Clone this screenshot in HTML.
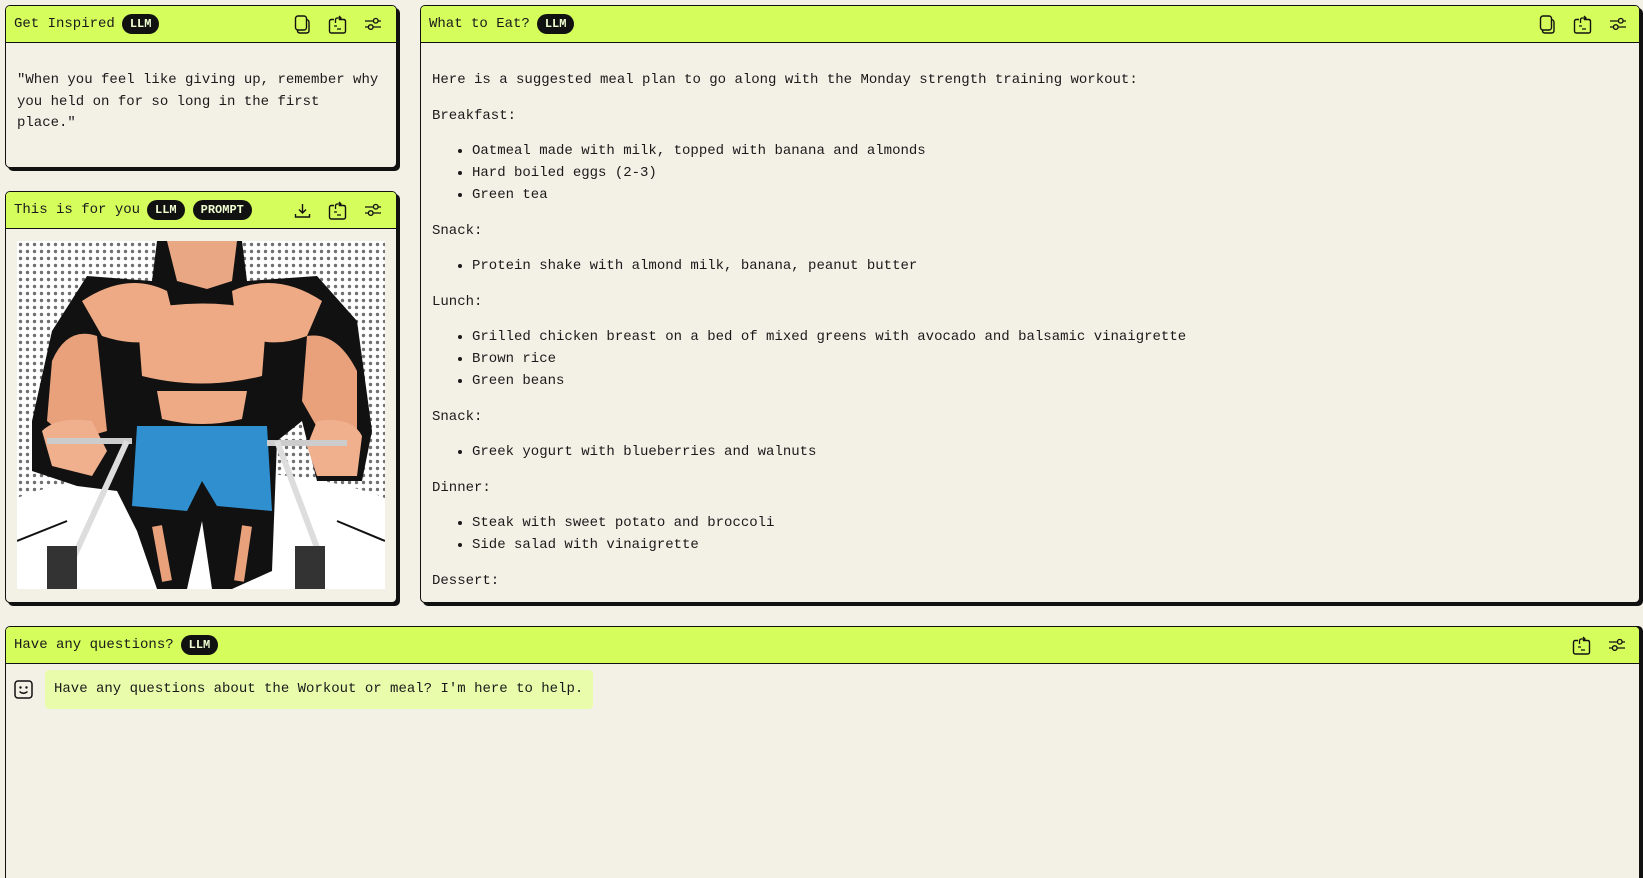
<!DOCTYPE html>
<html><head><meta charset="utf-8"><style>
*{box-sizing:border-box;margin:0;padding:0}
html{width:1643px;height:878px;overflow:hidden}
body{width:1643px;height:878px;background:#f3f0e6;font-family:"Liberation Mono",monospace;font-size:14px;color:#1a1a1a;position:relative;overflow:hidden}
.panel{position:absolute;border:1.5px solid #111;border-radius:5px;background:#f3f0e6;box-shadow:3px 3px 0 #111;overflow:hidden}
.hd{height:37px;background:#d5fd5c;border-bottom:1.5px solid #111;display:flex;align-items:center;padding-left:8px;position:relative}
.hd .t{font-size:14px;margin-right:7px}
.b{background:#111;color:#eefcd0;font-family:"Liberation Mono",monospace;font-weight:bold;font-size:12px;border-radius:10px;height:20px;line-height:20px;padding:0 8px;margin-right:8px}
.ic{position:absolute;top:9px;width:19px;height:19px}
.body{padding:12px 11px;line-height:22px}
.body p{margin:14px 0 13px}
.body ul{margin:0 0 13px 40px}
.body li{line-height:22px}
</style></head><body>
<svg width="0" height="0" style="position:absolute">
<defs>
<symbol id="copy" viewBox="0 0 19 19"><rect x="2.5" y="1" width="11" height="14" rx="2.5" fill="none" stroke="#111" stroke-width="1.4"/><path d="M13.5 4.5 Q16 5 16 7.5 V15.5 Q16 18 13.5 18 H7 Q4.5 18 4.5 15.5" fill="none" stroke="#111" stroke-width="1.4"/></symbol>
<symbol id="share" viewBox="0 0 19 19"><path d="M6 4.5 H3.5 Q1.5 4.5 1.5 6.5 V16 Q1.5 18 3.5 18 H15.5 Q17.5 18 17.5 16 V6.5 Q17.5 4.5 15.5 4.5 H12" fill="none" stroke="#111" stroke-width="1.4"/><path d="M7.5 8 V5 Q7.5 3 9.5 3 H13 M11 1 L13 3 L11 5" fill="none" stroke="#111" stroke-width="1.3"/><path d="M6 11 H9 M9 14 H13" stroke="#111" stroke-width="1.3"/></symbol>
<symbol id="sl" viewBox="0 0 19 19"><path d="M1 6 H17 M1 12 H17" stroke="#111" stroke-width="1.3"/><rect x="9.5" y="3.5" width="4.5" height="4.5" rx="2" fill="#d5fd5c" stroke="#111" stroke-width="1.3"/><rect x="4.5" y="9.8" width="4.5" height="4.5" rx="2" fill="#d5fd5c" stroke="#111" stroke-width="1.3"/></symbol>
<symbol id="dl" viewBox="0 0 19 19"><path d="M9.5 3 V12 M6 8.5 L9.5 12 L13 8.5 M2.5 13 V16 H16.5 V13" fill="none" stroke="#111" stroke-width="1.4"/></symbol>
</defs></svg>

<div class="panel" style="left:5px;top:5px;width:392px;height:163px">
<div class="hd"><span class="t">Get Inspired</span><span class="b">LLM</span>
<svg class="ic" style="left:287px"><use href="#copy"/></svg>
<svg class="ic" style="left:322px"><use href="#share"/></svg>
<svg class="ic" style="left:358px"><use href="#sl"/></svg></div>
<div style="padding:27px 11px;line-height:21.5px">"When you feel like giving up, remember why you held on for so long in the first place."</div>
</div>

<div class="panel" style="left:5px;top:191px;width:392px;height:412px">
<div class="hd"><span class="t">This is for you</span><span class="b">LLM</span><span class="b">PROMPT</span>
<svg class="ic" style="left:287px"><use href="#dl"/></svg>
<svg class="ic" style="left:322px"><use href="#share"/></svg>
<svg class="ic" style="left:358px"><use href="#sl"/></svg></div>
<svg style="position:absolute;left:11px;top:49px" width="368" height="348" viewBox="0 0 368 348">
<defs><pattern id="dots" width="7" height="7" patternUnits="userSpaceOnUse"><circle cx="3.5" cy="3.5" r="1.7" fill="#111"/></pattern></defs>
<rect width="368" height="348" fill="#fff"/>
<rect width="368" height="280" fill="url(#dots)" opacity=".6"/>
<ellipse cx="184" cy="290" rx="220" ry="60" fill="#fff"/>
<path d="M140 0 L225 0 L230 40 L300 35 L340 80 L355 190 L345 240 L300 240 L285 180 L260 200 L255 330 L215 348 L195 348 L185 280 L170 348 L140 348 L120 290 L100 250 L60 245 L15 230 L15 180 L35 90 L70 35 L135 40 Z" fill="#111"/>
<path d="M150 0 H220 L215 40 L190 48 L160 40 Z" fill="#e9a883"/>
<path d="M65 60 Q110 30 150 50 L160 90 Q130 110 85 95 Z M215 50 Q260 30 305 60 L290 95 Q250 110 220 90 Z" fill="#eeaa84"/>
<path d="M120 70 Q185 55 250 70 L245 135 Q185 150 125 135 Z" fill="#eeaa84"/>
<path d="M140 150 H230 L225 178 Q185 188 145 178 Z" fill="#eeaa84"/>
<path d="M35 120 Q50 85 80 95 L90 190 L55 200 L30 180 Z M290 95 Q320 90 340 130 L340 190 L305 195 L285 160 Z" fill="#e9a17c"/>
<path d="M25 190 Q40 175 75 180 L90 210 L75 235 L35 225 Z M300 180 Q335 175 345 195 L340 235 L300 235 L290 205 Z" fill="#f0b08e"/>
<path d="M120 185 H250 L255 270 L200 265 L185 240 L170 270 L115 265 Z" fill="#2f8fcf"/>
<path d="M115 200 H30 M250 202 H330" stroke="#ccc" stroke-width="6"/>
<path d="M110 200 L55 320 M260 200 L305 320" stroke="#ddd" stroke-width="6"/>
<path d="M0 300 L50 280 M320 280 L368 300" stroke="#111" stroke-width="2"/>
<rect x="30" y="305" width="30" height="43" fill="#333"/><rect x="278" y="305" width="30" height="43" fill="#333"/>
<path d="M140 285 L150 340 M230 285 L222 340" stroke="#e9a17c" stroke-width="10"/>
</svg>
</div>

<div class="panel" style="left:420px;top:5px;width:1220px;height:598px">
<div class="hd"><span class="t">What to Eat?</span><span class="b">LLM</span>
<svg class="ic" style="left:1117px"><use href="#copy"/></svg>
<svg class="ic" style="left:1152px"><use href="#share"/></svg>
<svg class="ic" style="left:1188px"><use href="#sl"/></svg></div>
<div class="body">
<p>Here is a suggested meal plan to go along with the Monday strength training workout:</p>
<p>Breakfast:</p>
<ul><li>Oatmeal made with milk, topped with banana and almonds</li><li>Hard boiled eggs (2-3)</li><li>Green tea</li></ul>
<p>Snack:</p>
<ul><li>Protein shake with almond milk, banana, peanut butter</li></ul>
<p>Lunch:</p>
<ul><li>Grilled chicken breast on a bed of mixed greens with avocado and balsamic vinaigrette</li><li>Brown rice</li><li>Green beans</li></ul>
<p>Snack:</p>
<ul><li>Greek yogurt with blueberries and walnuts</li></ul>
<p>Dinner:</p>
<ul><li>Steak with sweet potato and broccoli</li><li>Side salad with vinaigrette</li></ul>
<p>Dessert:</p>
</div>
</div>

<div class="panel" style="left:5px;top:626px;width:1635px;height:252px;border-bottom:none;border-radius:5px 5px 0 0;box-shadow:3px 0 0 #111">
<div class="hd"><span class="t">Have any questions?</span><span class="b">LLM</span>
<svg class="ic" style="left:1566px"><use href="#share"/></svg>
<svg class="ic" style="left:1602px"><use href="#sl"/></svg></div>
<svg style="position:absolute;left:8px;top:53px" width="19" height="19" viewBox="0 0 19 19"><rect x="1" y="1" width="17" height="17" rx="3" fill="none" stroke="#111" stroke-width="1.5"/><circle cx="6.5" cy="7.5" r="1.2" fill="#111"/><circle cx="12.5" cy="7.5" r="1.2" fill="#111"/><path d="M5.5 11.5 Q9.5 15 13.5 11.5" fill="none" stroke="#111" stroke-width="1.4"/></svg>
<div style="position:absolute;left:39px;top:43px;width:548px;height:39px;background:#e8fcac;border-radius:4px;padding:0 9px;line-height:38px">Have any questions about the Workout or meal? I'm here to help.</div>
</div>
</body></html>
